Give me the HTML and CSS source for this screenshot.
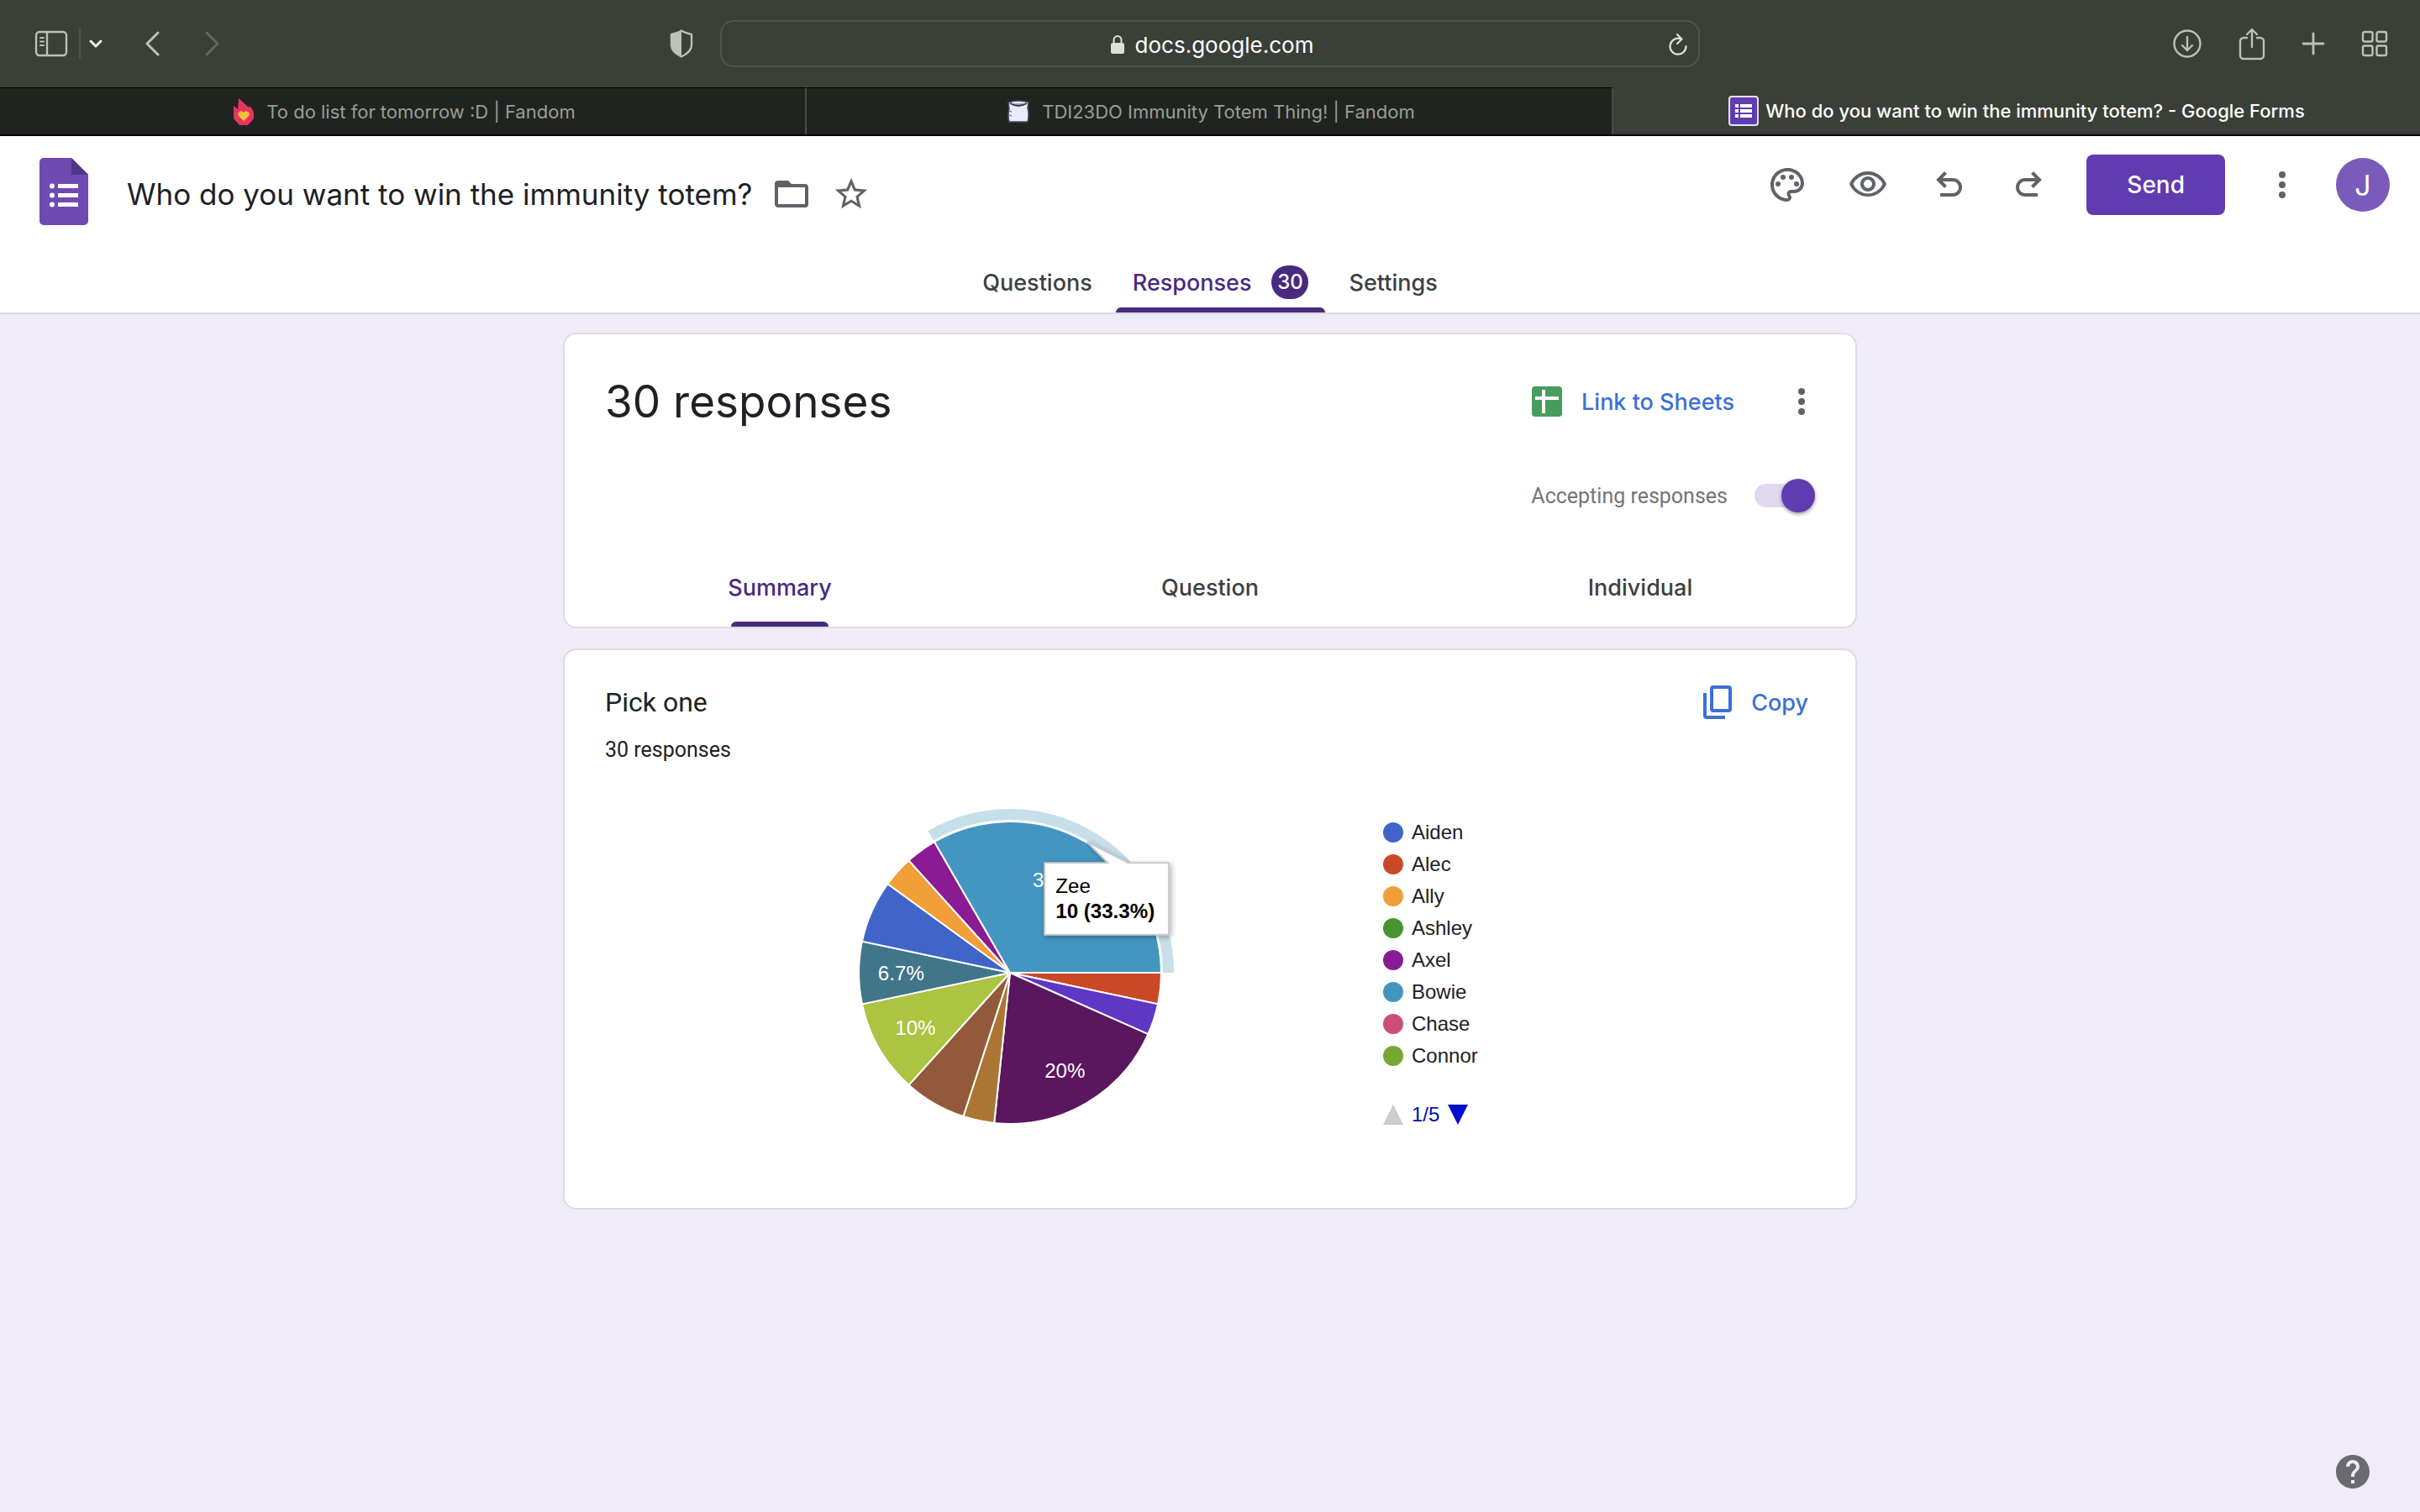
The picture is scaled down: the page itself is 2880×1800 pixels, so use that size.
FILE: index.html
```html
<!DOCTYPE html>
<html lang="en">
<head>
  <meta charset="UTF-8">
  <meta name="viewport" content="width=device-width, initial-scale=1.0">
  <title>Who do you want to win the immunity totem? - Google Forms</title>
  <link rel="stylesheet" href="styles.css">
</head>
<body>
  <!-- Browser toolbar -->
  <div class="toolbar">
    <div class="toolbar-left">
      <button class="tool" aria-label="Show sidebar">
        <svg width="40" height="32" viewBox="0 0 40 32" fill="none" stroke="currentColor" stroke-width="2.4" stroke-linecap="round"><rect x="2" y="2" width="36" height="28" rx="4"/><path d="M15 2v28"/><path d="M7 9h4M7 13.500h4M7 18h4" stroke-width="2"/></svg>
      </button>
      <span class="divider"></span>
      <button class="tool chevron" aria-label="Tab groups">
        <svg width="16" height="12" viewBox="0 0 16 12" fill="none" stroke="currentColor" stroke-width="3" stroke-linecap="round" stroke-linejoin="round"><path d="M2 3l6 6 6-6"/></svg>
      </button>
      <button class="tool back" aria-label="Back">
        <svg width="18" height="30" viewBox="0 0 18 30" fill="none" stroke="currentColor" stroke-width="3" stroke-linecap="round" stroke-linejoin="round"><path d="M16 2L3 15l13 13"/></svg>
      </button>
      <button class="tool forward" aria-label="Forward" disabled>
        <svg width="18" height="30" viewBox="0 0 18 30" fill="none" stroke="currentColor" stroke-width="3" stroke-linecap="round" stroke-linejoin="round"><path d="M2 2l13 13L2 28"/></svg>
      </button>
      <button class="tool shield" aria-label="Privacy report">
        <svg width="28" height="34" viewBox="0 0 28 34" fill="none"><path d="M14 1.500C10 4 6 5 2 6v13c0 6 6 10.500 12 13.500 6-3 12-7.500 12-13.500V6c-4-1-8-2-12-4.500z" stroke="currentColor" stroke-width="2.400" stroke-linejoin="round"/><path d="M14 1.500C10 4 6 5 2 6v13c0 6 6 10.500 12 13.500z" fill="currentColor"/></svg>
      </button>
    </div>
    <div class="address">
      <svg class="lock" width="18" height="24" viewBox="0 0 18 24"><rect x="1" y="10" width="16" height="13" rx="2.500" fill="currentColor"/><path d="M4.500 11V6.500a4.500 4.500 0 0 1 9 0V11" fill="none" stroke="currentColor" stroke-width="2"/></svg>
      <span>docs.google.com</span>
      <button class="reload" aria-label="Reload">
        <svg width="24" height="28" viewBox="0 0 24 28" fill="none" stroke="currentColor" stroke-width="2.200" stroke-linecap="round" stroke-linejoin="round"><path d="M15 7.200A9.500 9.500 0 1 0 21.500 16"/><path d="M11 2l5.500 5.500L11 13"/></svg>
      </button>
    </div>
    <div class="toolbar-right">
      <button class="tool" aria-label="Downloads">
        <svg width="36" height="36" viewBox="0 0 36 36" fill="none" stroke="currentColor" stroke-width="2.400" stroke-linecap="round" stroke-linejoin="round"><circle cx="18" cy="18" r="15.500"/><path d="M18 10v16M12 20l6 6 6-6"/></svg>
      </button>
      <button class="tool" aria-label="Share">
        <svg width="32" height="40" viewBox="0 0 32 40" fill="none" stroke="currentColor" stroke-width="2.400" stroke-linecap="round" stroke-linejoin="round"><path d="M10 13H6a4 4 0 0 0-4 4v17a4 4 0 0 0 4 4h20a4 4 0 0 0 4-4V17a4 4 0 0 0-4-4h-4"/><path d="M16 24V3M10 9l6-6 6 6"/></svg>
      </button>
      <button class="tool" aria-label="New tab">
        <svg width="28" height="28" viewBox="0 0 28 28" fill="none" stroke="currentColor" stroke-width="2.800" stroke-linecap="round"><path d="M14 2v24M2 14h24"/></svg>
      </button>
      <button class="tool" aria-label="Tab overview">
        <svg width="32" height="32" viewBox="0 0 32 32" fill="none" stroke="currentColor" stroke-width="2.400"><rect x="2" y="2" width="11.500" height="11.500" rx="2"/><rect x="18.500" y="2" width="11.500" height="11.500" rx="2"/><rect x="2" y="18.500" width="11.500" height="11.500" rx="2"/><rect x="18.500" y="18.500" width="11.500" height="11.500" rx="2"/></svg>
      </button>
    </div>
  </div>

  <nav class="browser-tabs">
    <a class="browser-tab" href="#">
      <svg width="26" height="34" viewBox="0 0 26 34"><path d="M7 1l12 11 1-2c2 3 5 5 5 10v5l-7 8H8l-7-8V10l5 4z" fill="#e5355f"/><path d="M13 28l-6-6a3.400 3.400 0 0 1 6-4 3.400 3.400 0 0 1 6 4z" fill="#f8c038"/></svg>
      To do list for tomorrow :D | Fandom
    </a>
    <a class="browser-tab" href="#">
      <svg width="28" height="28" viewBox="0 0 28 28"><path d="M2 3q12-4 24 0l-1 6q2 9 0 17H3q-2-8 0-16z" fill="#e9edfb" stroke="#4c4a66" stroke-width="1.500"/><path d="M4 4q10 6 20 0" fill="#aaaabb" stroke="#3d3b50" stroke-width="2"/><path d="M3 13l3 1M3 18l3 1" stroke="#8886a0" stroke-width="1.500"/></svg>
      TDI23DO Immunity Totem Thing! | Fandom
    </a>
    <a class="browser-tab current" href="#">
      <svg width="36" height="36" viewBox="0 0 36 36"><rect x="1" y="1" width="34" height="34" rx="3" fill="#613cb0" stroke="#e6e0f4" stroke-width="2"/><path d="M8 10h4v4H8zM14 10h14v4H14zM8 16h4v4H8zM14 16h14v4H14zM8 22h4v4H8zM14 22h14v4H14z" fill="#fff"/></svg>
      Who do you want to win the immunity totem? - Google Forms
    </a>
  </nav>

  <!-- Form header -->
  <header class="header">
    <div class="header-top">
      <a class="logo" href="#" aria-label="Forms home">
        <svg width="58" height="80" viewBox="0 0 58 80"><path d="M5 0h33l20 20v55a5 5 0 0 1-5 5H5a5 5 0 0 1-5-5V5a5 5 0 0 1 5-5z" fill="#6d4bb1"/><path d="M38 0l20 20H38z" fill="#513688"/><path d="M22 31h24v5H22zM22 42h24v5H22zM22 53h24v5H22z" fill="#fff"/><circle cx="15" cy="33.500" r="3" fill="#fff"/><circle cx="15" cy="44.500" r="3" fill="#fff"/><circle cx="15" cy="55.500" r="3" fill="#fff"/></svg>
      </a>
      <div class="form-title">
        <h1>Who do you want to win the immunity totem?</h1>
        <button class="icon-btn" aria-label="Move to folder">
          <svg width="48" height="48" viewBox="0 0 24 24" fill="currentColor"><path d="M20 6h-8l-2-2H4a2 2 0 0 0-2 2v12c0 1.100.9 2 2 2h16a2 2 0 0 0 2-2V8a2 2 0 0 0-2-2zm0 12H4V8h16z"/></svg>
        </button>
        <button class="icon-btn" aria-label="Star">
          <svg width="46" height="46" viewBox="0 0 24 24" fill="currentColor"><path d="M22 9.240l-7.190-.62L12 2 9.190 8.630 2 9.240l5.460 4.730L5.820 21 12 17.270 18.180 21l-1.630-7.030L22 9.240zM12 15.400l-3.760 2.270 1-4.280-3.320-2.880 4.380-.38L12 6.100l1.710 4.040 4.380.38-3.320 2.880 1 4.280L12 15.400z"/></svg>
        </button>
      </div>
      <div class="actions">
        <button class="icon-btn" aria-label="Customize theme">
          <svg width="48" height="48" viewBox="0 0 24 24" fill="currentColor"><path d="M12 22C6.490 22 2 17.510 2 12S6.490 2 12 2s10 4.040 10 9c0 3.310-2.690 6-6 6h-1.770c-.28 0-.5.22-.5.5 0 .12.05.23.13.33.41.47.64 1.060.64 1.670A2.500 2.500 0 0 1 12 22zm0-18c-4.410 0-8 3.590-8 8s3.590 8 8 8c.28 0 .5-.22.5-.5a.54.54 0 0 0-.14-.35c-.41-.46-.63-1.050-.63-1.650a2.500 2.500 0 0 1 2.500-2.500H16c2.210 0 4-1.790 4-4 0-3.860-3.590-7-8-7z"/><circle cx="6.500" cy="11.500" r="1.500"/><circle cx="9.500" cy="7.500" r="1.500"/><circle cx="14.500" cy="7.500" r="1.500"/><circle cx="17.500" cy="11.500" r="1.500"/></svg>
        </button>
        <button class="icon-btn" aria-label="Preview">
          <svg width="48" height="48" viewBox="0 0 24 24" fill="currentColor"><path d="M12 6a9.770 9.770 0 0 1 8.820 5.500 9.647 9.647 0 0 1-17.640 0A9.770 9.770 0 0 1 12 6m0-2C7 4 2.730 7.110 1 11.500 2.730 15.890 7 19 12 19s9.270-3.110 11-7.500C21.270 7.110 17 4 12 4zm0 5a2.500 2.500 0 0 1 0 5 2.500 2.500 0 0 1 0-5m0-2c-2.480 0-4.500 2.020-4.500 4.500S9.520 16 12 16s4.500-2.020 4.500-4.500S14.480 7 12 7z"/></svg>
        </button>
        <button class="icon-btn" aria-label="Undo">
          <svg width="48" height="48" viewBox="0 0 48 48" fill="none" stroke="currentColor" stroke-width="4"><path d="M12 18h17a9 9 0 0 1 0 18H14"/><path d="M20.500 9.500L12 18l8.500 8.500"/></svg>
        </button>
        <button class="icon-btn" aria-label="Redo">
          <svg width="48" height="48" viewBox="0 0 48 48" fill="none" stroke="currentColor" stroke-width="4"><path d="M36 18H19a9 9 0 0 0 0 18h15"/><path d="M27.500 9.500L36 18l-8.500 8.500"/></svg>
        </button>
        <button class="send">Send</button>
        <button class="icon-btn" aria-label="More">
          <svg width="48" height="48" viewBox="0 0 24 24" fill="currentColor"><circle cx="12" cy="6" r="2"/><circle cx="12" cy="12" r="2"/><circle cx="12" cy="18" r="2"/></svg>
        </button>
        <button class="avatar" aria-label="Account">J</button>
      </div>
    </div>
    <nav class="form-tabs">
      <button class="form-tab">Questions</button>
      <button class="form-tab active">Responses <span class="count">30</span></button>
      <button class="form-tab">Settings</button>
    </nav>
  </header>

  <main class="content">
    <section class="card">
      <div class="card-row">
        <h2>30 responses</h2>
        <a class="link" href="#">
          <svg width="36" height="36" viewBox="0 0 36 36"><rect width="36" height="36" rx="4" fill="#489c5e"/><path d="M4 12h28v4H4zM12 4h4v28h-4z" fill="#fff"/></svg>
          Link to Sheets
        </a>
        <button class="icon-btn more" aria-label="More options">
          <svg width="48" height="48" viewBox="0 0 24 24" fill="currentColor"><circle cx="12" cy="6" r="2"/><circle cx="12" cy="12" r="2"/><circle cx="12" cy="18" r="2"/></svg>
        </button>
      </div>
      <div class="card-row accepting">
        <label for="accepting">Accepting responses</label>
        <input type="checkbox" id="accepting" class="toggle" checked>
      </div>
      <div class="view-tabs">
        <button class="view-tab active"><span>Summary</span></button>
        <button class="view-tab"><span>Question</span></button>
        <button class="view-tab"><span>Individual</span></button>
      </div>
    </section>

    <section class="card question">
      <div class="card-row">
        <h3>Pick one</h3>
        <button class="link copy">
          <svg width="48" height="48" viewBox="0 0 48 48" fill="none" stroke="currentColor" stroke-width="4"><rect x="17" y="6" width="22" height="28" rx="2"/><path d="M9 13v27a2 2 0 0 0 2 2h22"/></svg>
          Copy
        </button>
      </div>
      <p class="total">30 responses</p>
      <div class="chart">
        <svg class="pie" width="400" height="400" viewBox="1 1 398 398" role="img" aria-label="Pie chart of votes">
          <path d="M106.250 37.600A187.500 187.500 0 0 1 387.500 200" fill="none" stroke="#c6dfeb" stroke-width="13"/>
          <g stroke="#fff" stroke-width="2">
            <path d="M200 200L379 200A179 179 0 0 1 375.100 237.200z" fill="#c94927"/>
            <path d="M200 200L375.100 237.200A179 179 0 0 1 363.500 272.800z" fill="#5f37c4"/>
            <path d="M200 200L363.500 272.800A179 179 0 0 1 181.300 378z" fill="#5a165e"/>
            <path d="M200 200L181.300 378A179 179 0 0 1 144.700 370.200z" fill="#ab7633"/>
            <path d="M200 200L144.700 370.200A179 179 0 0 1 80.200 333z" fill="#925a3b"/>
            <path d="M200 200L80.200 333A179 179 0 0 1 24.900 237.200z" fill="#adc342"/>
            <path d="M200 200L24.900 237.200A179 179 0 0 1 24.900 162.800z" fill="#41758a"/>
            <path d="M200 200L24.900 162.800A179 179 0 0 1 55.200 94.800z" fill="#4064c8"/>
            <path d="M200 200L55.200 94.800A179 179 0 0 1 80.200 67z" fill="#f09f39"/>
            <path d="M200 200L80.200 67A179 179 0 0 1 110.500 45z" fill="#8a1b94"/>
            <path d="M200 200L110.500 45A179 179 0 0 1 379 200z" fill="#4396c0"/>
          </g>
          <g class="slice-label">
            <text x="261" y="99">33.3%</text>
            <text x="71" y="209">6.7%</text>
            <text x="88" y="274">10%</text>
            <text x="265" y="324">20%</text>
          </g>
          <g class="tooltip">
            <path d="M241 70h75l-25-25 49 25h48v85H241z"/>
            <text x="254" y="105">Zee</text>
            <text x="254" y="135" class="value">10 (33.3%)</text>
          </g>
        </svg>
        <div class="legend">
          <ul>
            <li><span class="dot aiden"></span>Aiden</li>
            <li><span class="dot alec"></span>Alec</li>
            <li><span class="dot ally"></span>Ally</li>
            <li><span class="dot ashley"></span>Ashley</li>
            <li><span class="dot axel"></span>Axel</li>
            <li><span class="dot bowie"></span>Bowie</li>
            <li><span class="dot chase"></span>Chase</li>
            <li><span class="dot connor"></span>Connor</li>
          </ul>
          <div class="pager">
            <button aria-label="Previous page" disabled><svg width="24" height="24" viewBox="0 0 24 24"><path d="M12 0l12 24H0z" fill="#ccc"/></svg></button>
            <span>1/5</span>
            <button aria-label="Next page"><svg width="24" height="24" viewBox="0 0 24 24"><path d="M0 0h24L12 24z" fill="#0011cc"/></svg></button>
          </div>
        </div>
      </div>
    </section>
  </main>

  <button class="help" aria-label="Help">
    <svg width="48" height="48" viewBox="0 0 24 24" fill="currentColor"><path d="M12 2C6.480 2 2 6.480 2 12s4.480 10 10 10 10-4.480 10-10S17.520 2 12 2zm1 17h-2v-2h2v2zm2.070-7.750l-.9.92C13.450 12.900 13 13.500 13 15h-2v-.5c0-1.100.45-2.100 1.170-2.830l1.240-1.260c.37-.36.59-.86.59-1.410 0-1.100-.9-2-2-2s-2 .9-2 2H8c0-2.210 1.790-4 4-4s4 1.790 4 4c0 .88-.36 1.680-.93 2.250z"/></svg>
  </button>
</body>
</html>
```
FILE: styles.css
```css
* {
  box-sizing: border-box;
}
body {
  font-family: Inter, sans-serif;
  background-color: #efebf8;
  color: #202124;
  margin: 0;
  min-height: 100vh;
}
button {
  font: inherit;
  color: inherit;
  background: none;
  border: none;
  padding: 0;
  cursor: pointer;
}
a {
  color: inherit;
  text-decoration: none;
}
svg {
  display: block;
  flex: none;
}
h1, h2, h3, p, ul {
  margin: 0;
  padding: 0;
  font-weight: 400;
}

/* Browser toolbar */
.toolbar {
  display: grid;
  grid-template-columns: 1fr minmax(0, 1166px) 1fr;
  align-items: center;
  height: 104px;
  background-color: #3a3f37;
  color: #bbc1b8;
}
.toolbar-left {
  display: flex;
  align-items: center;
  padding: 0 32px 0 41px;
}
.divider {
  width: 2px;
  height: 36px;
  margin: 0 10px 0 13px;
  background-color: #50554d;
}
.chevron {
  color: #eef0ec;
}
.back {
  margin-left: 50px;
}
.forward {
  margin-left: 54px;
  color: #62675f;
}
.shield {
  margin-left: auto;
}
.address {
  position: relative;
  display: flex;
  align-items: center;
  justify-content: center;
  gap: 12px;
  height: 56px;
  padding: 2px 0 0 4px;
  border: 2px solid #50554d;
  border-radius: 16px;
  color: #fff;
  font-size: 26px;
}
.lock {
  color: #dde0db;
}
.reload {
  position: absolute;
  right: 12px;
  color: #dde0db;
}
.toolbar-right {
  display: flex;
  align-items: center;
  justify-content: flex-end;
  gap: 43px;
  padding-right: 38px;
}

.browser-tabs {
  display: grid;
  grid-template-columns: repeat(3, 1fr);
  height: 58px;
  border-bottom: 2px solid #000;
  background-color: #3a3f37;
}
.browser-tab {
  display: flex;
  align-items: center;
  justify-content: center;
  gap: 14px;
  padding-left: 4px;
  border-top: 1px solid #000;
  border-right: 2px solid #474c44;
  background-color: #20241f;
  color: #9a9d98;
  font-size: 22px;
}
.browser-tab.current {
  gap: 8px;
  padding: 0;
  border: none;
  background-color: #3a3f37;
  color: #fff;
  font-weight: 500;
}

/* Form header */
.header {
  background-color: #fff;
  border-bottom: 2px solid #dadce0;
}
.header-top {
  display: flex;
  align-items: center;
  height: 132px;
  padding: 0 36px 0 47px;
}
.form-title {
  display: flex;
  align-items: center;
  padding: 6px 0 0 46px;
}
.header h1 {
  margin-right: 22px;
  font-size: 35px;
  line-height: 48px;
}
.icon-btn {
  color: #5f6368;
}
.icon-btn + .icon-btn {
  margin-left: 24px;
}
.actions {
  display: flex;
  align-items: center;
  margin-left: auto;
  padding-bottom: 16px;
}
.actions .icon-btn + .icon-btn {
  margin-left: 48px;
}
.send {
  height: 72px;
  margin: 0 44px;
  padding: 0 48px;
  border-radius: 8px;
  background-color: #613cb0;
  color: #fff;
  font-size: 28px;
  font-weight: 500;
}
.avatar {
  width: 64px;
  height: 64px;
  margin-left: 40px;
  border-radius: 50%;
  background-color: #7a5aba;
  color: #fff;
  font-size: 34px;
}
.form-tabs {
  display: flex;
  justify-content: center;
  gap: 8px;
  height: 78px;
}
.form-tab {
  position: relative;
  display: flex;
  align-items: center;
  gap: 24px;
  padding: 6px 20px 0;
  color: #3c4043;
  font-size: 27px;
  font-weight: 500;
}
.form-tab.active {
  color: #482a80;
}
.form-tab.active::after,
.view-tab.active span::after {
  content: "";
  position: absolute;
  right: 0;
  bottom: 0;
  left: 0;
  height: 6px;
  border-radius: 6px 6px 0 0;
  background-color: #482a80;
}
.view-tab.active span::after {
  right: 4px;
  left: 4px;
}
.count {
  width: 44px;
  border-radius: 22px;
  background-color: #482a80;
  color: #fff;
  font-size: 24px;
  line-height: 40px;
}

/* Cards */
.content {
  display: flex;
  flex-direction: column;
  gap: 24px;
  max-width: 1540px;
  margin: 0 auto;
  padding: 22px 0;
}
.card {
  border: 2px solid #dadce0;
  border-radius: 16px;
  background-color: #fff;
  padding-top: 44px;
}
.card-row {
  display: flex;
  align-items: center;
  height: 72px;
  padding: 0 48px;
}
.card h2 {
  font-size: 53px;
}
.link {
  display: flex;
  align-items: center;
  gap: 23px;
  margin-left: auto;
  color: #3c70d6;
  font-size: 27px;
  font-weight: 500;
}
.more {
  margin-left: 56px;
  margin-right: -8px;
}
.accepting {
  justify-content: flex-end;
  gap: 32px;
  margin-top: 40px;
  color: #70757a;
  font-family: Roboto, sans-serif;
  font-size: 25px;
}
.toggle {
  appearance: none;
  display: flex;
  align-items: center;
  justify-content: flex-end;
  width: 72px;
  height: 28px;
  margin: 0;
  border-radius: 14px;
  background-color: #dfd8ef;
}
.toggle::before {
  content: "";
  width: 40px;
  height: 40px;
  flex: none;
  border-radius: 50%;
  background-color: #613cb0;
  box-shadow: 0 2px 4px rgba(0, 0, 0, 0.4);
}
.view-tabs {
  display: grid;
  grid-template-columns: repeat(3, 1fr);
  height: 92px;
  margin-top: 28px;
}
.view-tab {
  display: flex;
  align-items: center;
  justify-content: center;
  color: #3c4043;
  font-size: 27px;
  font-weight: 500;
}
.view-tab span {
  position: relative;
  line-height: 92px;
}
.view-tab.active {
  color: #482a80;
}
.question {
  padding-top: 26px;
  padding-bottom: 80px;
}
.card h3 {
  font-family: Roboto, sans-serif;
  font-size: 32px;
}
.copy {
  gap: 16px;
  margin-right: 8px;
}
.total {
  padding: 0 48px;
  font-family: Roboto, sans-serif;
  font-size: 25px;
  line-height: 42px;
}

/* Chart */
.chart {
  display: flex;
  justify-content: center;
  gap: 244px;
  margin-top: 44px;
  font-family: "Liberation Sans", Arial, sans-serif;
  font-size: 24px;
}
.slice-label {
  fill: #fff;
  text-anchor: middle;
}
.tooltip path {
  fill: #fff;
  stroke: #ccc;
  stroke-width: 2px;
  filter: drop-shadow(2px 2px 3px rgba(0, 0, 0, 0.3));
}
.tooltip text {
  fill: #000;
}
.tooltip .value {
  font-weight: 700;
}
.legend {
  width: 232px;
  padding-top: 14px;
}
.legend li {
  display: flex;
  align-items: center;
  gap: 10px;
  line-height: 38px;
}
.dot {
  width: 24px;
  height: 24px;
  border-radius: 50%;
}
.aiden { background-color: #4064c8; }
.alec { background-color: #c94927; }
.ally { background-color: #f09f39; }
.ashley { background-color: #45942f; }
.axel { background-color: #8a1b94; }
.bowie { background-color: #4396c0; }
.chase { background-color: #cb4e78; }
.connor { background-color: #76a831; }
.pager {
  display: flex;
  align-items: center;
  gap: 10px;
  margin-top: 32px;
  color: #0011aa;
  line-height: 38px;
}

.help {
  position: fixed;
  right: 56px;
  bottom: 24px;
  color: #6b6a6f;
}
```
